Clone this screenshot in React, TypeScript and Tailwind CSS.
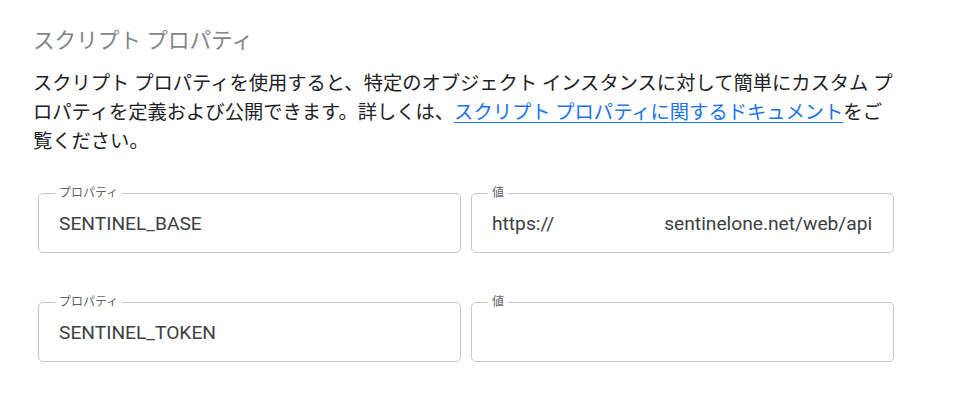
const rows = [
  { name: "SENTINEL_BASE", value: "https://", host: "sentinelone.net/web/api" },
  { name: "SENTINEL_TOKEN", value: "", host: "" },
];

export default function App() {
  return (
    <div className="min-h-screen bg-white pl-[33px] pt-[26px] font-['Roboto','Noto_Sans_CJK_JP',sans-serif]">
      <h2 className="text-[21.6px] leading-[30px] text-[#80868b]">スクリプト プロパティ</h2>
      <p className="mt-[13px] w-[880px] text-[19.3px] leading-[29px] text-[#202124]">
        スクリプト プロパティを使用すると、特定のオブジェクト インスタンスに対して簡単にカスタム プ
        <br />
        ロパティを定義および公開できます。詳しくは、
        <a href="#" className="text-[#1a73e8] underline underline-offset-[3px]">
          スクリプト プロパティに関するドキュメント
        </a>
        をご
        <br />
        覧ください。
      </p>

      <div className="ml-[5px] mt-[30px] flex w-[856px] flex-col gap-[42px]">
        {rows.map((row) => (
          <div key={row.name} className="grid grid-cols-2 gap-[10px]">
            <Field label="プロパティ">
              <span>{row.name}</span>
            </Field>
            <Field label="値">
              {row.value && <span>{row.value}</span>}
              {row.host && <span className="ml-[110px]">{row.host}</span>}
            </Field>
          </div>
        ))}
      </div>
    </div>
  );
}

function Field({ label, children }: { label: string; children: React.ReactNode }) {
  return (
    <fieldset className="min-w-0 rounded-[5px] border border-[#c4c7c5] px-4 pb-1">
      <legend className="px-1 text-[12px] leading-[14px] text-[#5f6368]">{label}</legend>
      <div className="flex h-12 items-center overflow-hidden whitespace-nowrap pl-1 text-[19.2px] text-[#3c4043]">
        {children}
      </div>
    </fieldset>
  );
}
